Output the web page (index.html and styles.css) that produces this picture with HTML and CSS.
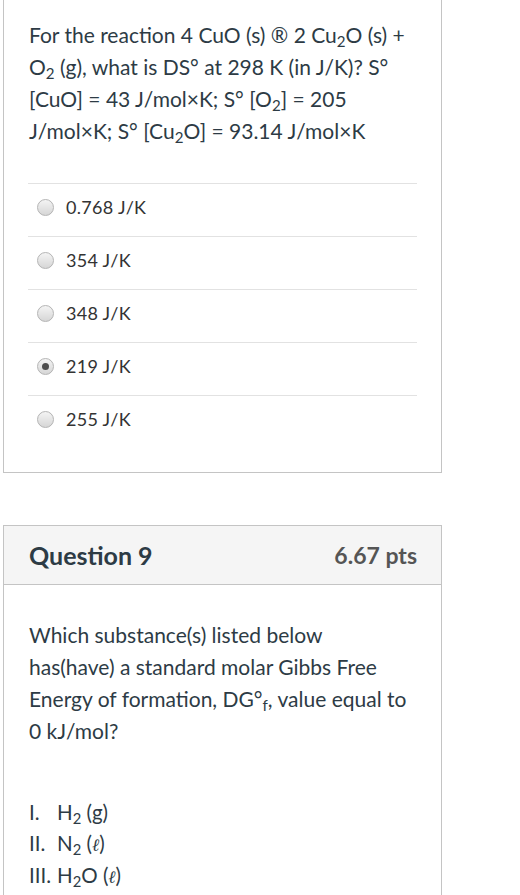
FILE: index.html
```html
<!DOCTYPE html>
<html>
<head>
<meta charset="utf-8">
<link rel="stylesheet" href="styles.css">
</head>
<body>
<div class="page">
  <div class="card card-cont">
    <div class="qtext">For the reaction 4 CuO (s) ® 2 Cu<sub>2</sub>O (s) +<br>O<sub>2</sub> (g), what is DS° at 298 K (in J/K)? S°<br>[CuO] = 43 J/mol×K; S° [O<sub>2</sub>] = 205<br>J/mol×K; S° [Cu<sub>2</sub>O] = 93.14 J/mol×K</div>
    <div class="answers">
      <div class="answer"><span class="radio"></span><span class="atext">0.768 J/K</span></div>
      <div class="answer"><span class="radio"></span><span class="atext">354 J/K</span></div>
      <div class="answer"><span class="radio"></span><span class="atext">348 J/K</span></div>
      <div class="answer"><span class="radio checked"></span><span class="atext">219 J/K</span></div>
      <div class="answer"><span class="radio"></span><span class="atext">255 J/K</span></div>
    </div>
  </div>

  <div class="card card-q">
    <div class="header">
      <span class="title">Question 9</span>
      <span class="pts">6.67 pts</span>
    </div>
    <div class="body">
      <div class="qtext">Which substance(s) listed below<br>has(have) a standard molar Gibbs Free<br>Energy of formation, DG°<sub>f</sub>, value equal to<br>0 kJ/mol?</div>
      <div class="list">
        <span class="mk">I.</span><span>H<sub>2</sub> (g)</span>
        <span class="mk">II.</span><span>N<sub>2</sub> (<span class="ell">ℓ</span>)</span>
        <span class="mk">III.</span><span>H<sub>2</sub>O (<span class="ell">ℓ</span>)</span>
      </div>
    </div>
  </div>
</div>
</body>
</html>
```

FILE: styles.css
```css
html, body {
  margin: 0;
  padding: 0;
  background: #fff;
}
body {
  font-family: Lato, "Liberation Sans", sans-serif;
  color: #2d3b45;
}
.page {
  width: 439px;
  padding-left: 3px;
}
.card {
  border: 1px solid #c4c4c4;
  background: #fff;
}
.card-cont {
  border-top: 0;
  padding: 19px 24px 0 24px;
  height: 453px;
}
.qtext {
  font-size: 21px;
  line-height: 32px;
  padding-left: 1px;
  white-space: nowrap;
}
sub {
  font-size: 0.72em;
  line-height: 0;
  vertical-align: -0.28em;
}
.answers {
  margin-top: 36px;
}
.answer {
  border-top: 1px solid #e2e2e2;
  height: 53px;
  display: flex;
  align-items: center;
  padding-bottom: 6px;
  box-sizing: border-box;
  padding-left: 9px;
}
.radio {
  width: 15px;
  height: 15px;
  border-radius: 50%;
  border: 1px solid #b4b4b4;
  background: linear-gradient(#f4f4f4, #d6d6d6);
  box-sizing: content-box;
  display: flex;
  align-items: center;
  justify-content: center;
  flex: none;
}
.radio.checked::after {
  content: "";
  width: 7px;
  height: 7px;
  border-radius: 50%;
  background: #4d4d4d;
}
.atext {
  margin-left: 12px;
  font-size: 18px;
  letter-spacing: 0.3px;
  color: #333;
}
.card-q {
  margin-top: 52px;
  height: 400px;
}
.header {
  background: #f5f5f5;
  border-bottom: 1px solid #c4c4c4;
  height: 58px;
  display: flex;
  align-items: center;
  justify-content: space-between;
  padding: 0 24px 0 25px;
}
.title {
  font-weight: 700;
  font-size: 25px;
}
.pts {
  font-weight: 700;
  font-size: 23px;
  color: #555;
}
.body {
  padding: 34px 24px 0 24px;
}
.list {
  margin-top: 50px;
  display: grid;
  grid-template-columns: 28px auto;
  font-size: 20.5px;
  line-height: 30.5px;
  padding-left: 1px;
}
.ell {
  font-family: "DejaVu Serif", serif;
  font-style: italic;
  font-size: 0.85em;
}
```
